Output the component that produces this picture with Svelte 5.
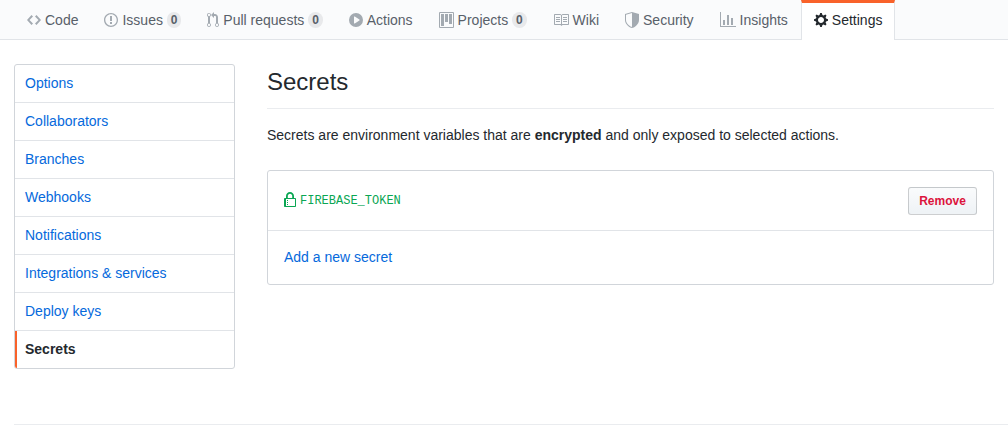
<script>
  const tabs = [
    { label: 'Code', w: 14, vb: '0 0 14 16', d: 'M9.5 3L8 4.5 11.5 8 8 11.5 9.5 13 14 8 9.5 3zm-5 0L0 8l4.5 5L6 11.5 2.5 8 6 4.5 4.5 3z' },
    { label: 'Issues', count: 0, w: 14, vb: '0 0 14 16', d: 'M7 2.3c3.14 0 5.7 2.56 5.7 5.7s-2.56 5.7-5.7 5.7A5.71 5.71 0 0 1 1.3 8c0-3.14 2.56-5.7 5.7-5.7zM7 1C3.14 1 0 4.14 0 8s3.14 7 7 7 7-3.14 7-7-3.14-7-7-7zm1 3H6v5h2V4zm0 6H6v2h2v-2z' },
    { label: 'Pull requests', count: 0, w: 12, vb: '0 0 12 16', d: 'M11 11.28V5c-.03-.78-.34-1.47-.94-2.06C9.46 2.35 8.78 2.03 8 2H7V0L4 3l3 3V4h1c.27.02.48.11.69.31.21.2.3.42.31.69v6.28A1.993 1.993 0 0 0 10 15a1.993 1.993 0 0 0 1-3.72zm-1 2.92c-.66 0-1.2-.55-1.2-1.2 0-.65.55-1.2 1.2-1.2.65 0 1.2.55 1.2 1.2 0 .65-.55 1.2-1.2 1.2zM4 3c0-1.11-.89-2-2-2a1.993 1.993 0 0 0-1 3.72v6.56A1.993 1.993 0 0 0 2 15a1.993 1.993 0 0 0 1-3.72V4.72c.59-.34 1-.98 1-1.72zm-.8 10c0 .66-.55 1.2-1.2 1.2-.65 0-1.2-.55-1.2-1.2 0-.65.55-1.2 1.2-1.2.65 0 1.2.55 1.2 1.2zM2 4.2C1.34 4.2.8 3.65.8 3c0-.65.55-1.2 1.2-1.2.65 0 1.2.55 1.2 1.2 0 .65-.55 1.2-1.2 1.2z' },
    { label: 'Actions', w: 14, vb: '0 0 14 16', d: 'M14 8A7 7 0 1 1 0 8a7 7 0 0 1 14 0zm-8.223 3.482l4.599-3.066a.5.5 0 0 0 0-.832L5.777 4.518A.5.5 0 0 0 5 4.934v6.132a.5.5 0 0 0 .777.416z' },
    { label: 'Projects', count: 0, w: 15, vb: '0 0 15 16', d: 'M10 12h3V2h-3v10zm-4-2h3V2H6v8zm-4 4h3V2H2v12zm-1 1h13V1H1v14zM14 0H1a1 1 0 0 0-1 1v14a1 1 0 0 0 1 1h13a1 1 0 0 0 1-1V1a1 1 0 0 0-1-1z' },
    { label: 'Wiki', w: 16, vb: '0 0 16 16', d: 'M3 5h4v1H3V5zm0 3h4V7H3v1zm0 2h4V9H3v1zm11-5h-4v1h4V5zm0 2h-4v1h4V7zm0 2h-4v1h4V9zm2-6v9c0 .55-.45 1-1 1H9.5l-1 1-1-1H2c-.55 0-1-.45-1-1V3c0-.55.45-1 1-1h5.5l1 1 1-1H15c.55 0 1 .45 1 1zm-8 .5L7.5 3H2v9h6V3.5zm7-.5H9.5l-.5.5V12h6V3z' },
    { label: 'Security', w: 14, vb: '0 0 14 16', d: 'M0 2l7-2 7 2v6.02C14 12.69 8.69 16 7 16c-1.69 0-7-3.31-7-7.98V2zm1 .75v5.27C1 12 5.9 15 7 15V1.04L1 2.75z' },
    { label: 'Insights', w: 16, vb: '0 0 16 16', d: 'M16 14v1H0V0h1v14h15zM5 13H3V8h2v5zm4 0H7V3h2v10zm4 0h-2V6h2v7z' },
    { label: 'Settings', selected: true, w: 14, vb: '0 0 14 16', d: 'M14 8.77v-1.6l-1.94-.64-.45-1.09.88-1.84-1.13-1.13-1.81.91-1.09-.45-.69-1.92h-1.6l-.63 1.94-1.11.45-1.84-.88-1.13 1.13.91 1.81-.45 1.09L0 7.23v1.59l1.94.64.45 1.09-.88 1.84 1.13 1.13 1.81-.91 1.09.45.69 1.92h1.59l.63-1.94 1.11-.45 1.84.88 1.13-1.13-.92-1.81.47-1.09L14 8.75v.02zM7 11c-1.66 0-3-1.34-3-3s1.34-3 3-3 3 1.34 3 3-1.34 3-3 3z' }
  ];
  const menu = ['Options', 'Collaborators', 'Branches', 'Webhooks', 'Notifications', 'Integrations & services', 'Deploy keys', 'Secrets'];
</script>

<div class="page">
  <nav class="tabs">
    {#each tabs as t}
      <a class="tab" class:selected={t.selected} href="#top">
        <svg class="ico" width={t.w} height="16" viewBox={t.vb} aria-hidden="true"><path fill-rule="evenodd" d={t.d} /></svg>
        <span class="tab-label">{t.label}</span>
        {#if t.count !== undefined}<span class="counter">{t.count}</span>{/if}
      </a>
    {/each}
  </nav>

  <div class="content">
    <ul class="menu">
      {#each menu as m}
        <li class="item" class:current={m === 'Secrets'}>{m}</li>
      {/each}
    </ul>

    <main class="main">
      <h2 class="title">Secrets</h2>
      <p class="desc">Secrets are environment variables that are <strong>encrypted</strong> and only exposed to selected actions.</p>
      <div class="box">
        <div class="row secret">
          <span class="secret-name">
            <svg class="lock" width="12" height="16" viewBox="0 0 12 16" aria-hidden="true"><path fill-rule="evenodd" d="M4 13H3v-1h1v1zm8-6v7c0 .55-.45 1-1 1H1c-.55 0-1-.45-1-1V7c0-.55.45-1 1-1h1V4c0-2.2 1.8-4 4-4s4 1.8 4 4v2h1c.55 0 1 .45 1 1zM3.8 6h4.41V4c0-1.22-.98-2.2-2.2-2.2-1.22 0-2.2.98-2.2 2.2v2H3.8zM11 7H2v7h9V7zM4 8H3v1h1V8zm0 2H3v1h1v-1z" /></svg>
            <code>FIREBASE_TOKEN</code>
          </span>
          <button class="remove" type="button">Remove</button>
        </div>
        <div class="row add"><a href="#top">Add a new secret</a></div>
      </div>
    </main>
  </div>

  <div class="footer-rule"></div>
</div>

<style>
  :global(body) { margin: 0; background: #fff; }
  .page {
    font-family: "Liberation Sans", Arial, sans-serif;
    font-size: 14px;
    line-height: 21px;
    color: #24292e;
    height: 444px;
    overflow: hidden;
  }
  .tabs {
    display: flex;
    height: 39px;
    padding-left: 14px;
    background: #fafbfc;
    border-bottom: 1px solid #e1e4e8;
  }
  .tab {
    display: flex;
    align-items: center;
    height: 40px;
    box-sizing: border-box;
    padding: 0 13px;
    color: #586069;
    text-decoration: none;
    white-space: nowrap;
  }
  .tab .ico { fill: #a3aab1; flex: none; margin-right: 4px; }
  .tab.selected {
    background: #fff;
    color: #24292e;
    border-top: 3px solid #f9622a;
    border-left: 1px solid #e1e4e8;
    border-right: 1px solid #e1e4e8;
    padding: 0 12px 3px 12px;
  }
  .tab.selected .ico { fill: #24292e; }
  .counter {
    display: inline-block;
    box-sizing: border-box;
    margin-left: 4px;
    padding: 2px 3.87px;
    font-size: 12px;
    font-weight: 600;
    line-height: 1;
    color: #586069;
    background: rgba(27, 31, 35, 0.08);
    border-radius: 20px;
  }
  .content {
    display: flex;
    align-items: flex-start;
    gap: 32px;
    padding: 24px 14px 0;
  }
  .menu {
    list-style: none;
    margin: 0;
    padding: 0;
    width: 221px;
    flex: none;
    box-sizing: border-box;
    background: #fff;
    border: 1px solid #d1d5da;
    border-radius: 3px;
    overflow: hidden;
  }
  .item {
    height: 38px;
    box-sizing: border-box;
    padding: 8px 10px;
    color: #0569dc;
    border-bottom: 1px solid #e1e4e8;
  }
  .item:last-child { border-bottom: 0; height: 37px; }
  .item.current {
    color: #24292e;
    font-weight: 600;
    padding-left: 8px;
    border-left: 2px solid #f9622a;
  }
  .main { flex: 1; min-width: 0; }
  .title {
    margin: 3px 0 16px;
    padding-bottom: 11px;
    font-size: 24px;
    font-weight: 400;
    line-height: 30px;
    border-bottom: 1px solid #eaecef;
  }
  .desc { margin: 0 0 24px; }
  .box {
    background: #fff;
    border: 1px solid #d1d5da;
    border-radius: 3px;
  }
  .row {
    display: flex;
    align-items: center;
    padding: 0 16px;
  }
  .secret {
    justify-content: space-between;
    height: 60px;
    box-sizing: border-box;
    border-bottom: 1px solid #e1e4e8;
  }
  .secret-name { display: flex; align-items: center; }
  .lock { fill: #0aa653; margin: 0 4px 1px 0; }
  code {
    font-family: "Liberation Mono", monospace;
    font-size: 12px;
    color: #0aa653;
    margin-top: 2px;
  }
  .remove {
    width: 69px;
    height: 28px;
    padding: 0;
    font-family: inherit;
    font-size: 12px;
    font-weight: 600;
    color: #dc143c;
    background: linear-gradient(-180deg, #fafbfc, #eff3f6 90%);
    border: 1px solid rgba(27, 31, 35, 0.2);
    border-radius: 3px;
  }
  .add { height: 53px; }
  .add a { color: #0569dc; text-decoration: none; }
  .footer-rule {
    margin: 55px 0 0 14px;
    border-top: 1px solid #eaecef;
  }
</style>
